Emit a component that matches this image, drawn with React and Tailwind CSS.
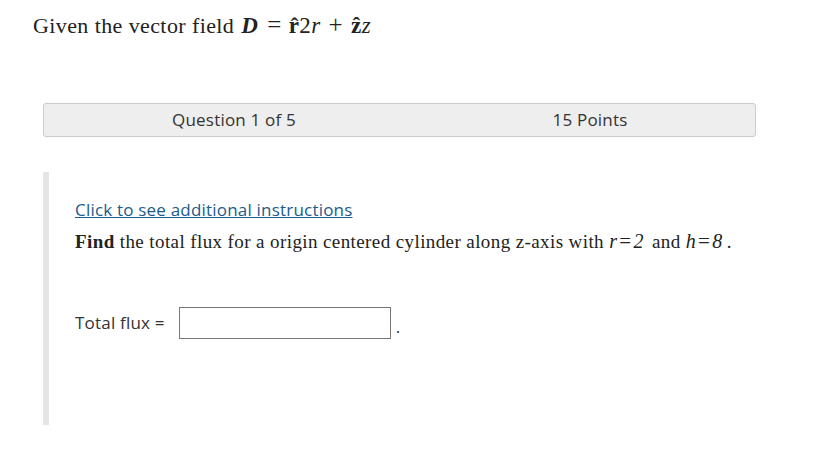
export default function App() {
  return (
    <div className="w-[824px] h-[453px] bg-white relative overflow-hidden">
      <div className="pl-[33px] pt-[12px] text-[22px] tracking-[0.4px] text-[#222] leading-[28px] font-['Liberation_Serif',serif]">
        Given the vector field{" "}
        <span className="text-[23px] leading-[20px]">
          <b className="italic ml-[1px]">D</b>
          <span className="ml-[9px] mr-[7px] text-[25px] leading-[20px]">=</span>
          <b>r̂</b>2<i>r</i>
          <span className="mx-[8px] text-[25px] leading-[20px]">+</span>
          <b>ẑ</b><i>z</i>
        </span>
      </div>

      <div className="mt-[63px] ml-[43px] w-[713px] h-[34px] bg-[#eeeeee] border border-[#cccccc] rounded-[3px] flex items-center pl-[12px] text-[17px] tracking-[0.2px] text-[#333] font-['Open_Sans',sans-serif]">
        <span className="w-[356px] shrink-0 text-center">Question 1 of 5</span>
        <span className="w-[356px] shrink-0 text-center">15 Points</span>
      </div>

      <div className="mt-[35px] ml-[43px] w-[740px] h-[253px] border-l-[6px] border-[#e5e5e5] pl-[26px] pt-[26px]">
        <a className="text-[17px] tracking-[0.2px] text-[#1b5c8c] underline font-['Open_Sans',sans-serif] leading-[24px] cursor-pointer">
          Click to see additional instructions
        </a>
        <p className="mt-[8px] h-[24px] text-[19px] tracking-[0.4px] text-[#222] leading-[24px] font-['Liberation_Serif',serif] whitespace-nowrap">
          <b>Find</b> the total flux for a origin centered cylinder along z-axis with{" "}
          <span className="text-[20px] leading-[20px]">
            <i>r</i>
            <span className="mx-[2px] text-[21px] leading-[20px]">=</span>
            <i>2</i>
          </span>
          <span className="ml-[8px] mr-[5px]">and</span>
          <span className="text-[20px] leading-[20px]">
            <i>h</i>
            <span className="mx-[2px] text-[21px] leading-[20px]">=</span>
            <i>8</i>
          </span>
          <span className="ml-[4px]">.</span>
        </p>
        <div className="mt-[52px] flex items-center text-[17px] tracking-[0.2px] text-[#333] font-['Open_Sans',sans-serif]">
          <span>Total flux =</span>
          <input
            type="text"
            className="ml-[14px] w-[212px] h-[32px] border border-[#767676] bg-white outline-none"
          />
          <span className="ml-[5px] mt-[8px]">.</span>
        </div>
      </div>
    </div>
  );
}
